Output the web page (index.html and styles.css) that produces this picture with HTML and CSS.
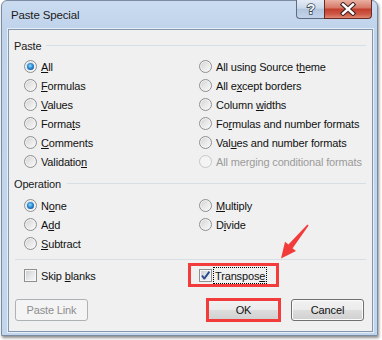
FILE: index.html
```html
<!DOCTYPE html>
<html>
<head>
<meta charset="utf-8">
<title>Paste Special</title>
<link rel="stylesheet" href="styles.css">
</head>
<body>
<div class="window">
  <div class="titlebar">
    <span class="title">Paste Special</span>
    <div class="caption">
      <div class="cap-btn cap-help">
        <svg width="14" height="16" viewBox="0 0 14 16"><text x="7" y="13" class="help-q">?</text></svg>
      </div>
      <div class="cap-btn cap-close">
        <svg width="18" height="14" viewBox="0 0 18 14">
          <path d="M4 2.5 L14 11.5 M14 2.5 L4 11.5" stroke="#3b2020" stroke-width="4.4" stroke-linecap="square" fill="none"/>
          <path d="M4 2.5 L14 11.5 M14 2.5 L4 11.5" stroke="#ffffff" stroke-width="2.4" stroke-linecap="square" fill="none"/>
        </svg>
      </div>
    </div>
  </div>
  <div class="client">
    <div class="group"><span>Paste</span><i class="rule"></i></div>
    <div class="opts">
      <div class="opt"><span class="radio on"></span><span><u>A</u>ll</span></div>
      <div class="opt"><span class="radio"></span><span>All using Source t<u>h</u>eme</span></div>
      <div class="opt"><span class="radio"></span><span><u>F</u>ormulas</span></div>
      <div class="opt"><span class="radio"></span><span>All e<u>x</u>cept borders</span></div>
      <div class="opt"><span class="radio"></span><span><u>V</u>alues</span></div>
      <div class="opt"><span class="radio"></span><span>Column <u>w</u>idths</span></div>
      <div class="opt"><span class="radio"></span><span>Forma<u>t</u>s</span></div>
      <div class="opt"><span class="radio"></span><span>Fo<u>r</u>mulas and number formats</span></div>
      <div class="opt"><span class="radio"></span><span><u>C</u>omments</span></div>
      <div class="opt"><span class="radio"></span><span>Val<u>u</u>es and number formats</span></div>
      <div class="opt"><span class="radio"></span><span>Validatio<u>n</u></span></div>
      <div class="opt disabled"><span class="radio"></span><span>All merging conditional formats</span></div>
    </div>
    <div class="group group-op"><span>Operation</span><i class="rule"></i></div>
    <div class="opts">
      <div class="opt"><span class="radio on"></span><span>N<u>o</u>ne</span></div>
      <div class="opt"><span class="radio"></span><span><u>M</u>ultiply</span></div>
      <div class="opt"><span class="radio"></span><span>A<u>d</u>d</span></div>
      <div class="opt"><span class="radio"></span><span>D<u>i</u>vide</span></div>
      <div class="opt"><span class="radio"></span><span><u>S</u>ubtract</span></div>
      <div></div>
    </div>
    <div class="sep"></div>
    <div class="checks">
      <div class="opt"><span class="check"></span><span>Skip <u>b</u>lanks</span></div>
      <div class="opt mark-host">
        <span class="check">
          <svg width="11" height="11" viewBox="0 0 11 11"><path d="M2 5.5 L4.3 8.6 L9.4 1.6" stroke="#2b4a90" stroke-width="1.9" fill="none" stroke-linejoin="round"/></svg>
        </span>
        <span class="focus">Transpos<u>e</u></span>
        <span class="redbox redbox-transpose"></span>
      </div>
    </div>
    <div class="buttons">
      <div class="btn btn-disabled">Paste Link</div>
      <div class="btn btn-ok mark-host">OK<span class="redbox redbox-ok"></span></div>
      <div class="btn">Cancel</div>
    </div>
  </div>
</div>
<svg class="arrow" width="45" height="45" viewBox="0 0 45 45">
  <polygon points="38.6,5.6 22.6,28.2 26.0,31.0 11,38.5 15.0,21.8 18.4,24.6 37.4,4.4" fill="#f23c3c"/>
</svg>
</body>
</html>
```

FILE: styles.css
```css
html, body {
  margin: 0;
  padding: 0;
  background: #ffffff;
}
body {
  font-family: "Liberation Sans", Arial, sans-serif;
  font-size: 11px;
  letter-spacing: -0.15px;
  color: #111111;
  width: 382px;
  height: 340px;
  overflow: hidden;
}
.window {
  box-sizing: border-box;
  width: 377px;
  height: 336px;
  margin-left: 1px;
  border: 1px solid #7b8ca2;
  border-radius: 6px 6px 0 0;
  background: linear-gradient(#cbdcf0 0, #bfd3eb 28px, #c2d6ed 100%);
  padding: 0 4px 3px 6px;
  display: flex;
  flex-direction: column;
  box-shadow: 1px 2px 3px rgba(0, 0, 0, 0.45);
}
.titlebar {
  height: 28px;
  display: flex;
  align-items: flex-start;
  flex: none;
}
.title {
  margin: 7px 0 0 3px;
  line-height: 15px;
  font-size: 11.5px;
  color: #1b1b1b;
}
.caption {
  display: flex;
  margin-left: auto;
  margin-top: -1px;
  margin-right: 1px;
}
.cap-btn {
  box-sizing: border-box;
  height: 19px;
  border: 1px solid #5d6c80;
  border-top: none;
  display: flex;
  align-items: center;
  justify-content: center;
}
.cap-help {
  width: 28px;
  border-right: none;
  border-radius: 0 0 0 4px;
  background: linear-gradient(#e3ebf5 0, #cbd9ea 45%, #b3c6de 52%, #c2d4ea 100%);
}
.cap-close {
  width: 48px;
  border-color: #6a2a24;
  border-radius: 0 0 4px 0;
  background: linear-gradient(#eab0a2 0, #d77b6a 42%, #c33f2e 52%, #cf5a47 80%, #df8a74 100%);
}
.help-q {
  font-family: "Liberation Sans", Arial, sans-serif;
  font-size: 14px;
  font-weight: bold;
  text-anchor: middle;
  fill: #f4f6f9;
  stroke: #3d4a5a;
  stroke-width: 1.6px;
  paint-order: stroke;
}
.client {
  flex: 1;
  box-sizing: border-box;
  background: #f0f0f0;
  border: 1px solid #8597ad;
  box-shadow: 0 0 0 1px #e4edf8;
  padding: 8px 6px 0 5px;
  display: flex;
  flex-direction: column;
}
.group {
  display: flex;
  align-items: center;
  height: 15px;
  gap: 5px;
  color: #1a1a1a;
}
.group-op {
  margin-top: 5px;
  gap: 6px;
}
.rule {
  flex: 1;
  height: 1px;
  background: #d5dfe5;
}
.opts, .checks {
  display: grid;
  grid-template-columns: 175px 1fr;
  grid-auto-rows: 19px;
  margin-left: 10px;
  margin-top: 4px;
}
.group-op + .opts {
  margin-top: 5px;
}
.opt {
  display: flex;
  align-items: center;
  gap: 4px;
  white-space: nowrap;
}
.opt u {
  text-underline-offset: 1px;
}
.radio {
  box-sizing: border-box;
  width: 13px;
  height: 13px;
  border-radius: 50%;
  border: 1px solid #8e9092;
  background: linear-gradient(135deg, #cfcfcf 0, #e6e6e6 45%, #fbfbfb 100%);
  box-shadow: inset 0 0 0 1px #f3f3f3;
  display: flex;
  align-items: center;
  justify-content: center;
  flex: none;
}
.radio.on::after {
  content: "";
  width: 7px;
  height: 7px;
  border-radius: 50%;
  background: radial-gradient(circle at 45% 40%, #9fdcff 0, #3a9be0 35%, #0f5ea8 75%, #0b3f78 100%);
}
.disabled {
  color: #9b9b9b;
}
.disabled .radio {
  border-color: #c6c7c8;
  background: #f4f4f4;
  box-shadow: none;
}
.sep {
  height: 1px;
  background: #d5dfe5;
  margin: 6px 0 0 1px;
}
.checks {
  margin-top: 6px;
}
.check {
  box-sizing: border-box;
  width: 13px;
  height: 13px;
  border: 1px solid #8e9092;
  background: linear-gradient(135deg, #c6cacf 0, #e4e6e8 50%, #f8f8f8 100%);
  box-shadow: inset 0 0 0 1px #f6f6f6;
  display: flex;
  align-items: center;
  justify-content: center;
  flex: none;
}
.check svg {
  display: block;
}
.focus {
  outline: 1px dotted #000000;
  outline-offset: 0;
  padding: 1px 1px 0 1px;
  margin-left: -2px;
  line-height: 14px;
}
.mark-host {
  position: relative;
}
.redbox {
  position: absolute;
  box-sizing: border-box;
  border: 3px solid #f23c3c;
  pointer-events: none;
}
.redbox-transpose {
  left: -11px;
  top: -3px;
  width: 91px;
  height: 24px;
}
.buttons {
  display: flex;
  gap: 11px;
  margin: 14px 2px 0 1px;
}
.btn {
  box-sizing: border-box;
  width: 73px;
  height: 22px;
  border: 1px solid #707070;
  border-radius: 3px;
  background: linear-gradient(#f2f2f2 0, #ebebeb 48%, #dddddd 52%, #cfcfcf 100%);
  box-shadow: inset 0 0 0 1px #fbfbfb;
  display: flex;
  align-items: center;
  justify-content: center;
  color: #111111;
}
.btn-disabled {
  border-color: #adb2b5;
  background: #f4f4f4;
  box-shadow: none;
  color: #8d8d8d;
}
.btn-ok {
  margin-left: auto;
}
.redbox-ok {
  left: -2px;
  top: -2px;
  width: 75px;
  height: 24px;
}
.arrow {
  position: absolute;
  left: 270px;
  top: 220px;
}
```
